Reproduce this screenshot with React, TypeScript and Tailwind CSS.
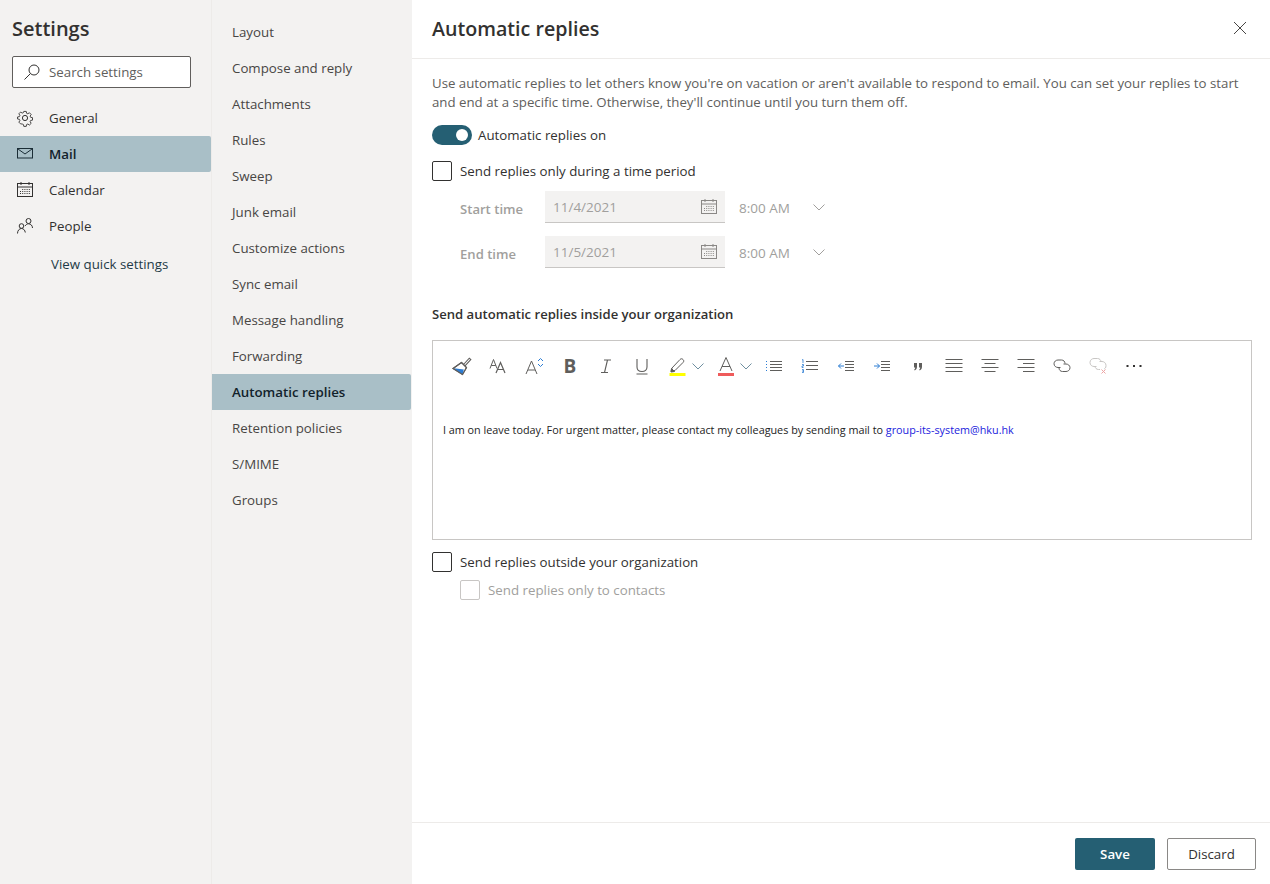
import React from "react";

const FONT = "font-['Open_Sans','Noto_Sans',sans-serif]";

const primaryNav: [string, React.ReactNode, boolean][] = [
  ["General", <GearIcon key="g" />, false],
  ["Mail", <MailIcon key="m" />, true],
  ["Calendar", <CalIcon key="c" color="#323130" />, false],
  ["People", <PeopleIcon key="p" />, false],
];

const subNav = ["Layout", "Compose and reply", "Attachments", "Rules", "Sweep", "Junk email", "Customize actions", "Sync email", "Message handling", "Forwarding", "Automatic replies", "Retention policies", "S/MIME", "Groups"];

function GearIcon() {
  return (
    <svg width="18" height="18" viewBox="0 0 18 18" fill="none" stroke="#323130" strokeWidth="1">
      <circle cx="9" cy="9" r="2.6" />
      <path d="M7.6 1.5h2.8l.4 2.1 1.4.6 1.8-1.2 2 2-1.2 1.8.6 1.4 2.1.4v2.8l-2.1.4-.6 1.4 1.2 1.8-2 2-1.8-1.2-1.4.6-.4 2.1H7.6l-.4-2.1-1.4-.6L4 15.7l-2-2 1.2-1.8-.6-1.4-2.1-.4V7.8l2.1-.4.6-1.4L2 4.200l2-2L5.800 3.400l1.400-.6z" transform="translate(1.1 1.1) scale(.88)" />
    </svg>
  );
}
function MailIcon() {
  return (
    <svg width="18" height="18" viewBox="0 0 18 18" fill="none" stroke="#1b2d36" strokeWidth="1">
      <rect x="1.500" y="3.500" width="15" height="9.500" />
      <path d="M2 4l7 5 7-5" />
    </svg>
  );
}
function CalIcon({ color }: { color: string }) {
  const dots = [];
  for (let r = 0; r < 3; r++) for (let c = 0; c < 5; c++) if (!(r === 0 && c === 0)) dots.push(<rect key={`${r}${c}`} x={4 + c * 2.2} y={8 + r * 2} width="1" height="1" fill={color} stroke="none" />);
  return (
    <svg width="18" height="18" viewBox="0 0 18 18" fill="none" stroke={color} strokeWidth="1">
      <rect x="1.500" y="2.500" width="15" height="13" />
      <path d="M1.500 6h15M5 1v3M13 1v3" />
      {dots}
    </svg>
  );
}
function PeopleIcon() {
  return (
    <svg width="18" height="18" viewBox="0 0 18 18" fill="none" stroke="#323130" strokeWidth="1">
      <circle cx="5.500" cy="9" r="2.300" />
      <circle cx="12.500" cy="4" r="2.500" />
      <path d="M1.500 16.500c0-3 1.800-5 4-5s3.500 1.800 3.800 4M9 9c1-1.300 2.200-2.200 3.500-2.200 2.300 0 4 1.800 4 4.200" />
    </svg>
  );
}
function SearchIcon() {
  return (
    <svg width="18" height="18" viewBox="0 0 18 18" fill="none" stroke="#323130" strokeWidth="1">
      <circle cx="11" cy="7" r="5" />
      <path d="M7.500 10.500L1.500 16.500" />
    </svg>
  );
}
function Chevron({ color = "#a19f9d", size = 12 }: { color?: string; size?: number }) {
  return (
    <svg width={size} height={size} viewBox="0 0 12 12" fill="none" stroke={color} strokeWidth="1">
      <path d="M0.500 3.500L6 9l5.500-5.500" />
    </svg>
  );
}

const G = "#5f5e5c";
const B = "#2b7cd3";

function Lines({ rows, blue }: { rows: [number, number, number][]; blue?: React.ReactNode }) {
  return (
    <svg width="18" height="18" viewBox="0 0 18 18" fill="none" stroke={G} strokeWidth="1">
      {rows.map(([x1, x2, y]) => <path key={y} d={`M${x1} ${y + 0.5}H${x2}`} />)}
      {blue}
    </svg>
  );
}

const toolbar: React.ReactNode[] = [
  <svg key="brush" width="20" height="20" viewBox="0 0 20 20" fill="none" stroke="#605e5c" strokeWidth="1.100">
    <path d="M11.500 8.500l5.800-6.300 1.500 1.300-5.800 6.300" />
    <path d="M9.500 6.500l5 5-4 7-9.500-6z" fill="#fff" />
    <path d="M4 12.500l7.800 1-1.300 5-9.500-6z" fill="#2b7cd3" stroke="none" />
    <path d="M9.500 6.500l5 5-4 7-9.500-6z" />
  </svg>,
  <svg key="size" width="18" height="18" viewBox="0 0 18 18" fill="none" stroke={G} strokeWidth="1">
    <path d="M1 11.500L4.500 2.500 8 11.500M2.200 8.500h4.600" />
    <path d="M7 16L11.500 5.500 16 16M8.500 12.500h6" strokeWidth="1.200" />
  </svg>,
  <svg key="grow" width="18" height="18" viewBox="0 0 18 18" fill="none" strokeWidth="1">
    <path d="M1 17L6.500 4 12 17M3 13h7" stroke={G} />
    <path d="M13 4l2.500-2.500L18 4M13 7l2.500 2.500L18 7" stroke={B} />
  </svg>,
  <span key="b" className="text-[19px] font-bold text-[#5f5e5c] leading-none font-['Open_Sans',sans-serif]">B</span>,
  <svg key="i" width="18" height="18" viewBox="0 0 18 18" fill="none" stroke={G} strokeWidth="1.100">
    <path d="M7 3h7M4 15.500h7M10.500 3L7.500 15.500" />
  </svg>,
  <svg key="u" width="18" height="18" viewBox="0 0 18 18" fill="none" stroke={G} strokeWidth="1.100">
    <path d="M4 2v8c0 3 2 4.500 5 4.500s5-1.500 5-4.500V2M3.500 17h11" />
  </svg>,
];

function IconBtn({ children }: { children: React.ReactNode }) {
  return <div className="w-9 h-9 flex items-center justify-center shrink-0">{children}</div>;
}

function CheckBox({ disabled }: { disabled?: boolean }) {
  return <div className={`w-5 h-5 rounded-[2px] bg-white shrink-0 border ${disabled ? "border-[#c8c6c4]" : "border-[#323130]"}`} />;
}

function DateRow({ label, date, mt }: { label: string; date: string; mt: string }) {
  return (
    <div className={`flex items-center h-8 ${mt}`}>
      <div className="w-[85px] pl-[28px] box-content text-[13.100px] font-semibold text-[#a19f9d] pt-[5px] whitespace-nowrap">{label}</div>
      <div className="w-[180px] h-8 bg-[#f3f2f1] border-b border-[#c8c6c4] flex items-center justify-between pl-[8px] pr-[7px] text-[13.500px] text-[#a19f9d]">
        <span className="pt-[1px]">{date}</span>
        <CalIcon color="#8a8886" />
      </div>
      <span className="ml-[14px] pt-[2px] text-[13.500px] text-[#a19f9d] w-[74px] whitespace-nowrap">8:00 AM</span>
      <Chevron />
    </div>
  );
}

export default function App() {
  return (
    <div className={`${FONT} w-[1270px] h-[884px] flex overflow-hidden bg-white text-[13.300px] leading-[21px] text-[#323130]`}>
      <aside className="w-[212px] h-full bg-[#f3f2f1] border-r border-[#edebe9] flex flex-col shrink-0">
        <h1 className="pl-3 pt-[14px] text-[20px] leading-[30px] font-semibold text-[#323130]">Settings</h1>
        <div className="mx-3 mt-[12px] w-[179px] h-8 bg-white border border-[#605e5c] rounded-[2px] flex items-center pl-[10px] gap-[8px] text-[#605e5c]">
          <SearchIcon />
          <span className="leading-none pt-[1px]">Search settings</span>
        </div>
        <nav className="mt-[12px] flex flex-col">
          {primaryNav.map(([label, icon, active]) => (
            <div key={label} className={`w-[211px] h-9 flex items-center pl-[16px] gap-[15px] rounded-r-[2px] ${active ? "bg-[#a9bfc7] font-semibold text-[#12222b]" : ""}`}>
              {icon}
              <span>{label}</span>
            </div>
          ))}
        </nav>
        <div className="pl-[51px] mt-[2px] h-9 flex items-center text-[#1f3b47]">View quick settings</div>
      </aside>

      <div className="w-[200px] h-full bg-[#f3f2f1] shrink-0 pt-[14px]">
        {subNav.map((s) => (
          <div key={s} className={`w-[199px] h-9 flex items-center pl-5 rounded-r-[2px] ${s === "Automatic replies" ? "bg-[#a9bfc7] font-semibold text-[#12222b]" : "text-[#484644]"}`}>{s}</div>
        ))}
      </div>

      <main className="flex-1 h-full flex flex-col min-w-0">
        <header className="h-[59px] shrink-0 border-b border-[#edebe9] flex items-center justify-between pl-5 pr-[23px]">
          <h2 className="text-[19.650px] leading-[28px] font-semibold text-[#323130]">Automatic replies</h2>
          <svg width="14" height="14" viewBox="0 0 14 14" fill="none" stroke="#484644" strokeWidth="1" className="-mt-[3px]"><path d="M1 1l12 12M13 1L1 13" /></svg>
        </header>

        <div className="flex-1 pl-5 pr-[18px] pt-[15px] min-h-0">
          <p className="text-[13.250px] leading-[19px] text-[#605e5c] w-[815px]">
            Use automatic replies to let others know you're on vacation or aren't available to respond to email. You can set your replies to start and end at a specific time. Otherwise, they'll continue until you turn them off.
          </p>
          <div className="mt-[13px] flex items-center h-5 gap-[6px]">
            <div className="w-10 h-5 rounded-full bg-[#255f73] relative shrink-0">
              <div className="absolute right-[4px] top-[4px] w-3 h-3 rounded-full bg-white" />
            </div>
            <span>Automatic replies on</span>
          </div>
          <div className="mt-4 flex items-center h-5 gap-2">
            <CheckBox />
            <span>Send replies only during a time period</span>
          </div>
          <DateRow label="Start time" date="11/4/2021" mt="mt-[10px]" />
          <DateRow label="End time" date="11/5/2021" mt="mt-[13px]" />

          <h3 className="mt-[36px] text-[13.100px] leading-5 font-semibold text-[#323130]">Send automatic replies inside your organization</h3>

          <div className="mt-4 w-[820px] h-[200px] border border-[#c8c6c4] bg-white">
            <div className="flex items-center pl-[11px] pt-[7px]">
              {toolbar.map((n, i) => <IconBtn key={i}>{n}</IconBtn>)}
              <IconBtn>
                <svg width="18" height="20" viewBox="0 0 18 20" fill="none" stroke={G} strokeWidth="1">
                  <path d="M3 12L11 3.500c1-1 2-1 3 0s1 2 0 3L6 14.500l-4 1z" />
                  <path d="M2.500 12.500l3 3-3.500.5z" fill={G} />
                  <rect x="0.500" y="17" width="16" height="3" fill="#ffff00" stroke="none" />
                </svg>
              </IconBtn>
              <div className="w-3 -ml-1 mr-1 flex items-center justify-center"><Chevron color="#6f8fa0" /></div>
              <IconBtn>
                <svg width="16" height="20" viewBox="0 0 16 20" fill="none" stroke={G} strokeWidth="1">
                  <path d="M2 15L8 1.500 14 15M4 10.500h8" />
                  <rect x="0" y="17" width="16" height="3" fill="#ef5b5b" stroke="none" />
                </svg>
              </IconBtn>
              <div className="w-3 -ml-1 mr-1 flex items-center justify-center"><Chevron color="#6f8fa0" /></div>
              <IconBtn>
                <Lines rows={[[5, 17, 4], [5, 17, 7], [5, 17, 10], [5, 17, 13]]} blue={<path d="M1.500 4v1M1.500 7v1M1.500 10v1M1.500 13v1" stroke={B} />} />
              </IconBtn>
              <IconBtn>
                <Lines rows={[[5, 17, 4], [5, 17, 8], [5, 17, 12]]} blue={<path d="M1 3l1-.5v3.500M1 7.500h1.500v1.500H1v1.500h1.500M1 12.500h1.500v3H1M1 14h1.500" stroke={B} strokeWidth=".8" />} />
              </IconBtn>
              <IconBtn>
                <Lines rows={[[8, 17, 4], [8, 17, 7], [8, 17, 10], [8, 17, 13]]} blue={<path d="M7 9H1.500M4 6.500L1.500 9 4 11.500" stroke={B} />} />
              </IconBtn>
              <IconBtn>
                <Lines rows={[[8, 17, 4], [8, 17, 7], [8, 17, 10], [8, 17, 13]]} blue={<path d="M1 9h5.500M4 6.500L6.500 9 4 11.500" stroke={B} />} />
              </IconBtn>
              <IconBtn>
                <svg width="18" height="18" viewBox="0 0 18 18" fill={G}>
                  <path d="M5 6h3v3.500c0 1.800-.6 3.300-2.300 4l-.5-1c.7-.4 1-1 1-1.900H5zM10 6h3v3.500c0 1.800-.6 3.300-2.300 4l-.5-1c.7-.4 1-1 1-1.900H10z" />
                </svg>
              </IconBtn>
              <IconBtn><Lines rows={[[0.500, 17.500, 2], [0.500, 17.500, 6], [0.500, 17.500, 10], [0.500, 17.500, 14]]} /></IconBtn>
              <IconBtn><Lines rows={[[0.500, 17.500, 2], [3.500, 14.500, 6], [0.500, 17.500, 10], [3.500, 14.500, 14]]} /></IconBtn>
              <IconBtn><Lines rows={[[0.500, 17.500, 2], [6, 17.500, 6], [0.500, 17.500, 10], [6, 17.500, 14]]} /></IconBtn>
              <IconBtn>
                <svg width="18" height="14" viewBox="0 0 18 14" fill="none" stroke={G} strokeWidth="1">
                  <path d="M7.500 8.500H5C3 8.500 1 7 1 4.750S3 1 5 1h3.500c2 0 3.500 1.500 3.500 3.500" />
                  <path d="M10.500 5H13c2 0 4 1.500 4 3.750S15 12.500 13 12.500H9.500C7.500 12.500 6 11 6 9" />
                </svg>
              </IconBtn>
              <IconBtn>
                <svg width="18" height="18" viewBox="0 0 18 18" fill="none" stroke="#c8c6c4" strokeWidth="1">
                  <path d="M7.500 9.500H5C3 9.500 1 8 1 5.500S3 1.500 5 1.500h3.500c2 0 3.500 1.500 3.500 3.500" />
                  <path d="M10.500 4.500H13c2 0 4 1.500 4 4s-1 3-2 3.500M11 12.500H9.500C7.500 12.500 6 11 6 9" />
                  <path d="M12.500 12.500l4 4M16.500 12.500l-4 4" stroke="#eda3a3" />
                </svg>
              </IconBtn>
              <IconBtn>
                <svg width="16" height="4" viewBox="0 0 16 4" fill="#323130"><rect x="0.500" y="1" width="2" height="2" /><rect x="7" y="1" width="2" height="2" /><rect x="13.500" y="1" width="2" height="2" /></svg>
              </IconBtn>
            </div>
            <div className="pl-[10px] mt-[39px] text-[10.800px] leading-[14px] text-[#222] whitespace-nowrap">
              I am on leave today. For urgent matter, please contact my colleagues by sending mail to <span className="text-[#2222dd]">group-its-system@hku.hk</span>
            </div>
          </div>

          <div className="mt-3 flex items-center h-5 gap-2">
            <CheckBox />
            <span>Send replies outside your organization</span>
          </div>
          <div className="mt-2 ml-7 flex items-center h-5 gap-2 text-[#a19f9d]">
            <CheckBox disabled />
            <span>Send replies only to contacts</span>
          </div>
        </div>

        <footer className="h-[62px] shrink-0 border-t border-[#edebe9] flex items-start justify-end gap-3 pt-[15px] pr-[14px]">
          <button className="w-20 h-8 rounded-[2px] bg-[#255f73] text-white font-semibold text-[13.300px]">Save</button>
          <button className="w-[89px] h-8 rounded-[2px] bg-white border border-[#8a8886] text-[#323130] text-[13.300px]">Discard</button>
        </footer>
      </main>
    </div>
  );
}
